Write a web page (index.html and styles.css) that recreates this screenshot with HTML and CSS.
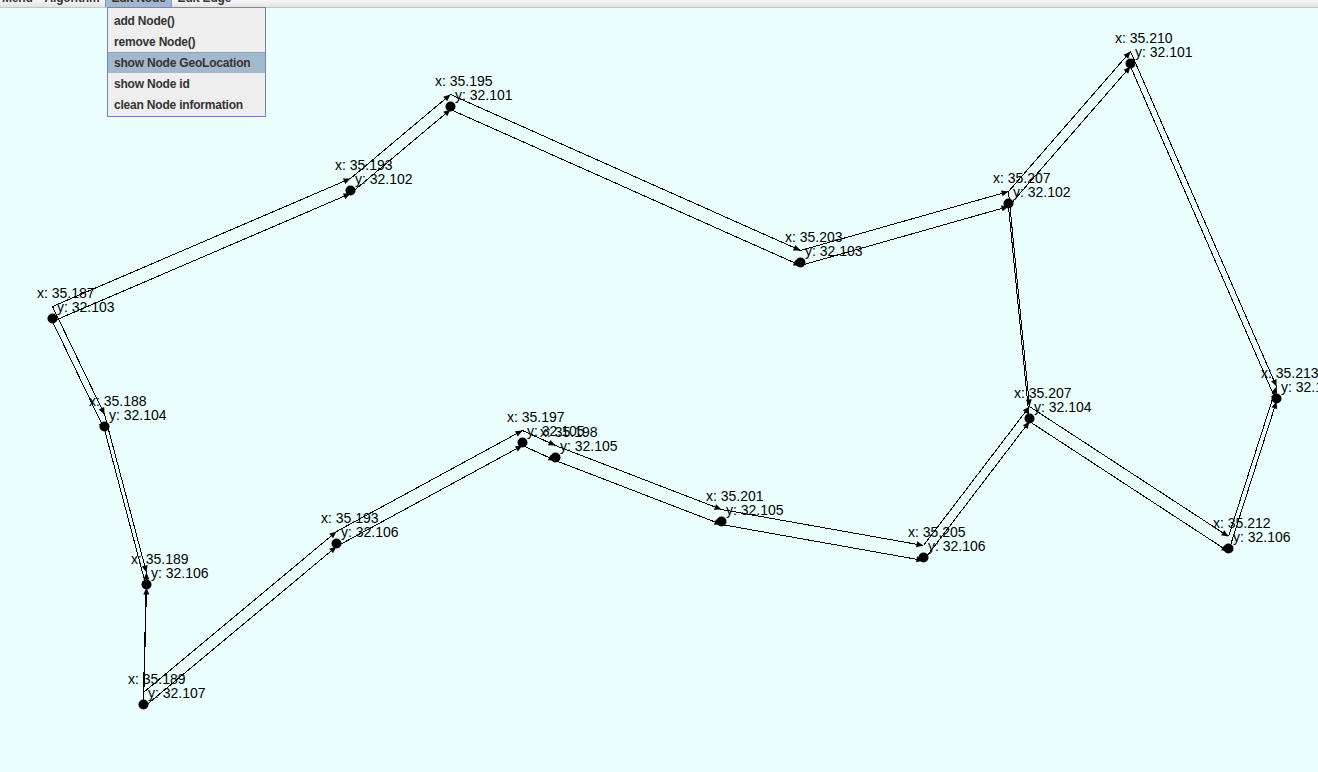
FILE: index.html
```html
<!DOCTYPE html>
<html>
<head>
<meta charset="utf-8">
<title>Graph</title>
<link rel="stylesheet" href="styles.css">
</head>
<body>
<div class="app">
  <div class="menubar">
    <div class="menu-item first"><span>Menu</span></div>
    <div class="menu-item"><span>Algorithm</span></div>
    <div class="menu-item selected"><span>Edit Node</span></div>
    <div class="menu-item"><span>Edit Edge</span></div>
  </div>
  <div class="canvas">
    <svg id="graph" xmlns="http://www.w3.org/2000/svg" width="1318" height="764" viewBox="0 8 1318 764">
      <g id="edges" class="edges"></g>
      <g id="arrows" class="arrows"></g>
      <g id="dots" class="dots"></g>
      <g id="labels" class="labels"></g>
    </svg>
  </div>
  <div class="popup">
    <div class="popup-item">add Node()</div>
    <div class="popup-item">remove Node()</div>
    <div class="popup-item active">show Node GeoLocation</div>
    <div class="popup-item">show Node id</div>
    <div class="popup-item">clean Node information</div>
  </div>
</div>
<script src="script.js"></script>
</body>
</html>
```

FILE: styles.css
```css
* { box-sizing: border-box; }
html, body { margin: 0; padding: 0; }
body {
  width: 1318px;
  height: 772px;
  overflow: hidden;
  background: #ebffff;
  font-family: "Liberation Sans", Arial, sans-serif;
}
.app {
  position: relative;
  display: flex;
  flex-direction: column;
  width: 1318px;
  height: 772px;
}
.menubar {
  display: flex;
  height: 8px;
  overflow: hidden;
  margin-left: -4px;
  background: linear-gradient(#f7f7f7, #e3e3e3);
  border-bottom: 1px solid #c6c6c6;
}
.menu-item {
  height: 7px;
  padding: 0 6px;
  font-size: 12px;
  font-weight: bold;
  letter-spacing: -0.2px;
  color: #333333;
  white-space: nowrap;
}
.menu-item span {
  display: block;
  line-height: 14px;
  margin-top: -9px;
}
.menu-item.selected {
  background: #a3b8cc;
  box-shadow: inset 1px 0 #8198bd, inset -1px 0 #8198bd;
}
.canvas {
  flex: 1;
  background: #ebffff;
  overflow: hidden;
}
.canvas svg { display: block; }
.edges line {
  stroke: #000000;
  stroke-width: 1;
  shape-rendering: crispEdges;
}
.arrows polygon {
  fill: #000000;
  stroke: none;
}
.dots circle { fill: #000000; }
.labels text {
  font-family: "Liberation Sans", Arial, sans-serif;
  font-size: 14px;
  fill: #000000;
}
.popup {
  position: absolute;
  left: 107px;
  top: 7px;
  width: 159px;
  height: 110px;
  padding: 2px 0 1px;
  background: #eeeeee;
  border: 1px solid #6d86bd;
}
.popup-item {
  height: 21px;
  line-height: 23px;
  padding-left: 6px;
  font-size: 12px;
  font-weight: bold;
  letter-spacing: -0.2px;
  color: #333333;
  white-space: nowrap;
  overflow: hidden;
}
.popup-item.active {
  background: #a3b8cc;
  box-shadow: inset 0 1px #8aa0c2;
}
```

FILE: script.js
```js
(function () {
  var NS = 'http://www.w3.org/2000/svg';
  var nodes = {
    A: [52, 318, '35.187', '32.103'],
    B: [104, 426, '35.188', '32.104'],
    C: [146, 584, '35.189', '32.106'],
    D: [143, 704, '35.189', '32.107'],
    E: [336, 543, '35.193', '32.106'],
    F: [522, 442, '35.197', '32.105'],
    G: [555, 457, '35.198', '32.105'],
    H: [721, 521, '35.201', '32.105'],
    I: [923, 557, '35.205', '32.106'],
    J: [1029, 418, '35.207', '32.104'],
    K: [1228, 548, '35.212', '32.106'],
    L: [1276, 398, '35.213', '32.105'],
    M: [1130, 63, '35.210', '32.101'],
    N: [1008, 203, '35.207', '32.102'],
    O: [800, 262, '35.203', '32.103'],
    P: [450, 106, '35.195', '32.101'],
    Q: [350, 190, '35.193', '32.102']
  };
  var edges = [
    ['A', 'Q'], ['Q', 'P'], ['P', 'O'], ['O', 'N'], ['N', 'M'], ['M', 'L'],
    ['L', 'K'], ['K', 'J'], ['J', 'N'], ['J', 'I'], ['I', 'H'], ['H', 'G'],
    ['G', 'F'], ['F', 'E'], ['E', 'D'], ['D', 'C'], ['C', 'B'], ['B', 'A']
  ];
  var OFFS = [-12, 3];

  function make(name, attrs, text) {
    var e = document.createElementNS(NS, name);
    for (var k in attrs) e.setAttribute(k, attrs[k]);
    if (text != null) e.textContent = text;
    return e;
  }

  var gE = document.getElementById('edges');
  var gA = document.getElementById('arrows');
  var gD = document.getElementById('dots');
  var gL = document.getElementById('labels');

  edges.forEach(function (pair) {
    var l = nodes[pair[0]], r = nodes[pair[1]];
    if (l[0] > r[0]) { var t = l; l = r; r = t; }
    var dx = r[0] - l[0], dy = r[1] - l[1];
    var len = Math.sqrt(dx * dx + dy * dy);
    var ux = dx / len, uy = dy / len;
    OFFS.forEach(function (o) {
      gE.appendChild(make('line', {
        x1: l[0] + 0.5, y1: l[1] + o + 0.5, x2: r[0] + 0.5, y2: r[1] + o + 0.5
      }));
      var tx = r[0] + 0.5, ty = r[1] + o + 0.5;
      var bx = tx - ux * 7, by = ty - uy * 7;
      var pts = [
        tx.toFixed(1) + ',' + ty.toFixed(1),
        (bx - uy * 3).toFixed(1) + ',' + (by + ux * 3).toFixed(1),
        (bx + uy * 3).toFixed(1) + ',' + (by - ux * 3).toFixed(1)
      ].join(' ');
      gA.appendChild(make('polygon', { points: pts }));
    });
  });

  Object.keys(nodes).forEach(function (k) {
    var n = nodes[k];
    gD.appendChild(make('circle', { cx: n[0] + 0.5, cy: n[1] + 0.5, r: 5 }));
    gL.appendChild(make('text', { x: n[0] - 15, y: n[1] - 20 }, 'x: ' + n[2]));
    gL.appendChild(make('text', { x: n[0] + 5, y: n[1] - 6 }, 'y: ' + n[3]));
  });
})();
```
